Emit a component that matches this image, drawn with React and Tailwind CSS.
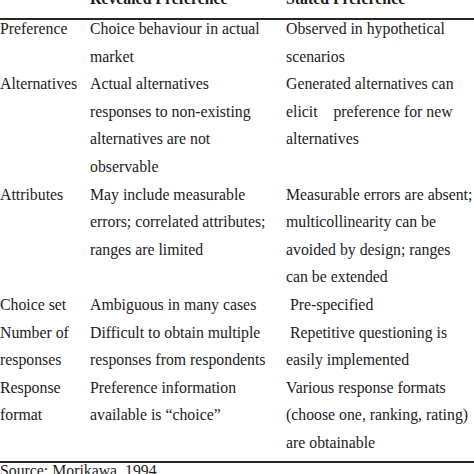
import React from "react";

const rows = [
  {
    label: ["Preference"],
    revealed: ["Choice behaviour in actual", "market"],
    stated: ["Observed in hypothetical", "scenarios"],
  },
  {
    label: ["Alternatives"],
    revealed: [
      "Actual alternatives",
      "responses to non-existing",
      "alternatives are not",
      "observable",
    ],
    stated: [
      "Generated alternatives can",
      "elicit\u00a0\u00a0\u00a0 preference for new",
      "alternatives",
    ],
  },
  {
    label: ["Attributes"],
    revealed: [
      "May include measurable",
      "errors; correlated attributes;",
      "ranges are limited",
    ],
    stated: [
      "Measurable errors are absent;",
      "multicollinearity can be",
      "avoided by design; ranges",
      "can be extended",
    ],
  },
  {
    label: ["Choice set"],
    revealed: ["Ambiguous in many cases"],
    stated: ["\u00a0Pre-specified"],
  },
  {
    label: ["Number of", "responses"],
    revealed: ["Difficult to obtain multiple", "responses from respondents"],
    stated: ["\u00a0Repetitive questioning is", "easily implemented"],
  },
  {
    label: ["Response", "format"],
    revealed: ["Preference information", "available is \u201cchoice\u201d"],
    stated: [
      "Various response formats",
      "(choose one, ranking, rating)",
      "are obtainable",
    ],
  },
];

const Lines = ({ lines }) => (
  <div>
    {lines.map((line, i) => (
      <div key={i} className="whitespace-pre">
        {line}
      </div>
    ))}
  </div>
);

export default function App() {
  return (
    <div className="w-[474px] h-[474px] overflow-hidden bg-white text-[#1c1c1c] text-[15.8px] font-['Liberation_Serif','DejaVu_Serif',serif]">
      <div className="grid grid-cols-[90px_196px_1fr] -mt-[9px] mb-[11px] leading-[16px] font-bold">
        <div />
        <div>Revealed Preference</div>
        <div>Stated Preference</div>
      </div>

      <div className="relative z-10 h-[2px] bg-[#262626]" />

      <div className="relative z-0 -mt-[5px] leading-[27.6px]">
        {rows.map((row, i) => (
          <div key={i} className="grid grid-cols-[90px_196px_1fr]">
            <Lines lines={row.label} />
            <Lines lines={row.revealed} />
            <Lines lines={row.stated} />
          </div>
        ))}
      </div>

      <div className="mt-[4px] h-[2px] bg-[#262626]" />

      <div className="leading-[16px]">Source: Morikawa, 1994</div>
    </div>
  );
}
